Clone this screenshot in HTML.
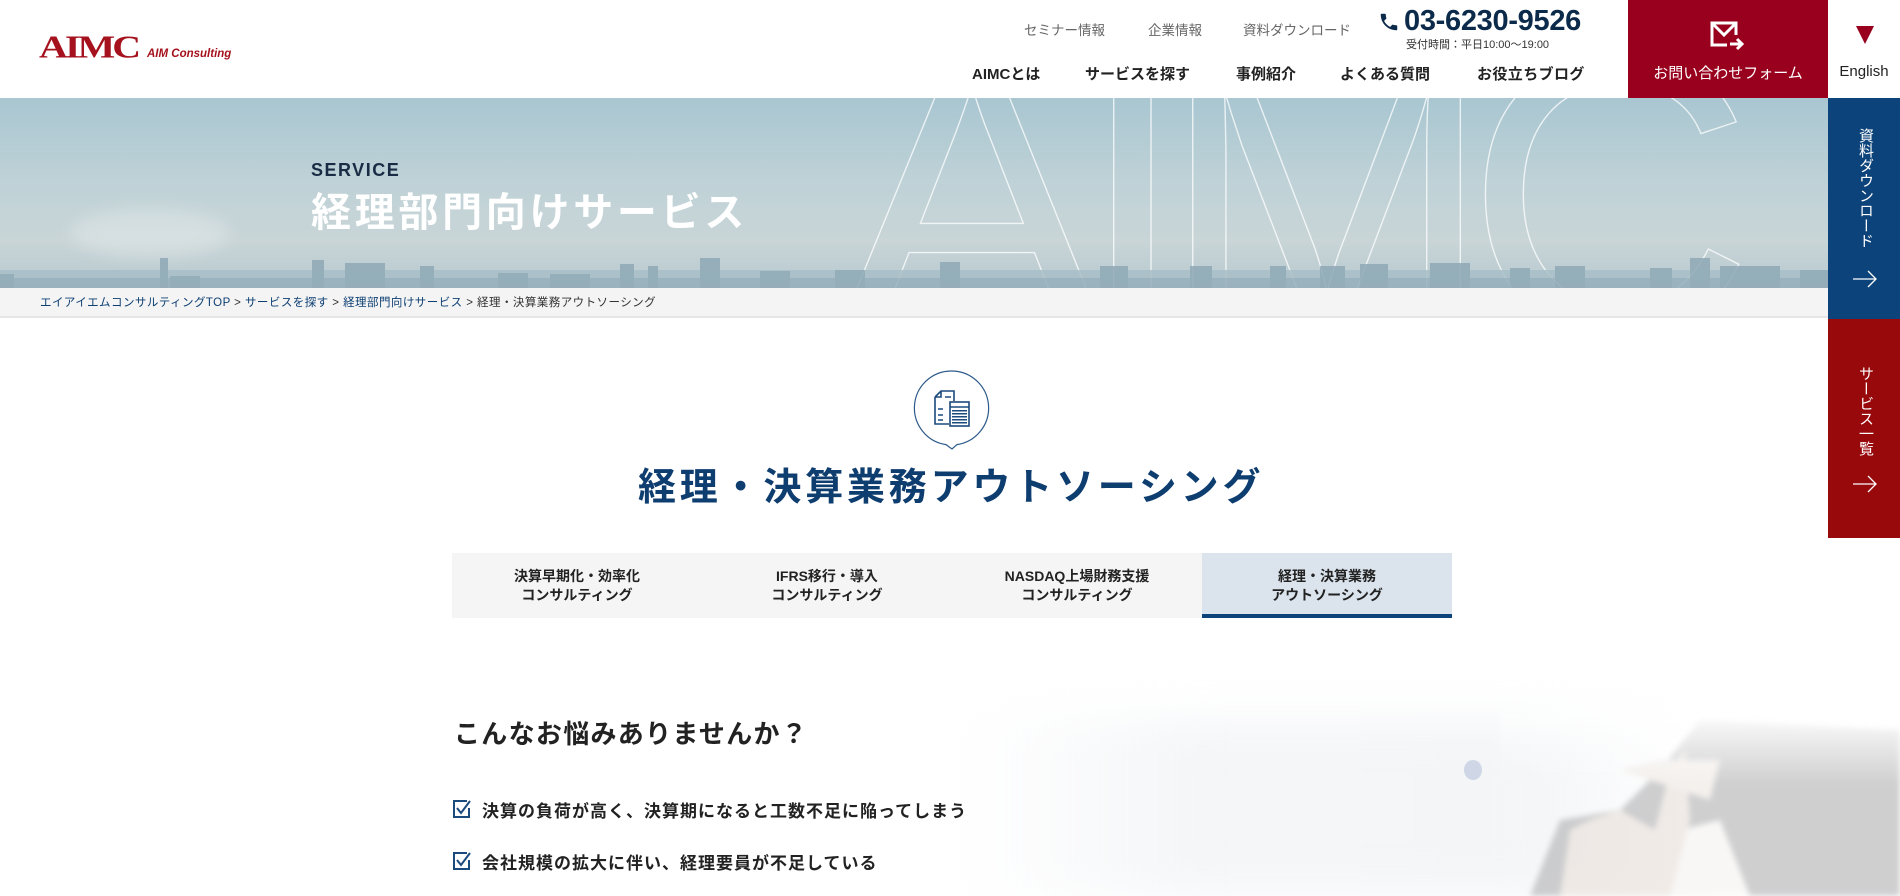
<!DOCTYPE html>
<html><head><meta charset="utf-8"><style>
*{margin:0;padding:0;box-sizing:border-box}
body{width:1900px;height:896px;overflow:hidden;background:#fff;font-family:"Liberation Sans","Noto Sans CJK JP",sans-serif;position:relative;color:#222}
.a{position:absolute;white-space:nowrap}
.hero{position:absolute;left:0;top:98px;width:1828px;height:190px;overflow:hidden;background:linear-gradient(180deg,#a9c6d1 0%,#bfd2d7 45%,#c9d5d7 75%,#b7c9cf 100%)}
.crumb{position:absolute;left:0;top:288px;width:1828px;height:30px;background:#f4f4f4;border-bottom:2px solid #e6e6e6}
.tab{position:absolute;top:553px;width:250px;height:65px;background:#f5f5f5;font-size:14px;font-weight:bold;text-align:center;line-height:19px;padding-top:14px;color:#222}
</style></head><body>
<!-- header -->
<div class="a" style="left:39px;top:28px;font-family:'Liberation Serif',serif;font-weight:bold;font-size:40px;color:#a5121e;letter-spacing:-3px;transform:scaleY(0.8);transform-origin:top left">AIMC</div>
<div class="a" style="left:147px;top:48px;font-size:11.5px;font-weight:bold;font-style:italic;color:#a5121e">AIM Consulting</div>
<div class="a" style="left:1024px;top:19px;font-size:13.5px;color:#666">セミナー情報</div>
<div class="a" style="left:1148px;top:19px;font-size:13.5px;color:#666">企業情報</div>
<div class="a" style="left:1243px;top:19px;font-size:13.5px;color:#666">資料ダウンロード</div>
<svg class="a" style="left:1378px;top:11px" width="22" height="22" viewBox="0 0 24 24"><path fill="#0c2a4a" d="M6.6 10.8c1.4 2.8 3.8 5.1 6.6 6.6l2.2-2.2c.3-.3.7-.4 1-.2 1.1.4 2.3.6 3.6.6.6 0 1 .4 1 1V20c0 .6-.4 1-1 1C10.6 21 3 13.4 3 4c0-.6.4-1 1-1h3.5c.6 0 1 .4 1 1 0 1.3.2 2.5.6 3.6.1.3 0 .7-.2 1z"/></svg>
<div class="a" style="left:1404px;top:5px;font-size:29px;font-weight:bold;color:#0c2a4a;letter-spacing:-0.3px">03-6230-9526</div>
<div class="a" style="left:1406px;top:36px;font-size:11px;color:#333">受付時間：平日10:00〜19:00</div>
<div class="a" style="left:972px;top:63px;font-size:15px;font-weight:bold;color:#222">AIMCとは</div>
<div class="a" style="left:1085px;top:63px;font-size:15px;font-weight:bold;color:#222">サービスを探す</div>
<div class="a" style="left:1236px;top:63px;font-size:15px;font-weight:bold;color:#222">事例紹介</div>
<div class="a" style="left:1340px;top:63px;font-size:15px;font-weight:bold;color:#222">よくある質問</div>
<div class="a" style="left:1477px;top:63px;font-size:15px;font-weight:bold;color:#222;letter-spacing:.4px">お役立ちブログ</div>
<div class="a" style="left:1628px;top:0;width:200px;height:98px;background:#98001e"></div>
<svg class="a" style="left:1708px;top:19px" width="40" height="34" viewBox="0 0 40 34"><path d="M19 26H4V4h24v12M4 4l12 12 12-12" fill="none" stroke="#fff" stroke-width="3"/><path d="M22 25h11M29 20l5 5-5 5" fill="none" stroke="#fff" stroke-width="3"/></svg>
<div class="a" style="left:1628px;top:62px;width:200px;text-align:center;font-size:15px;color:#fff">お問い合わせフォーム</div>
<div class="a" style="left:1856px;top:26px;width:0;height:0;border-left:9px solid transparent;border-right:9px solid transparent;border-top:18px solid #98001e"></div>
<div class="a" style="left:1828px;top:63px;width:72px;text-align:center;font-size:15px;color:#222">English</div>
<!-- hero -->
<div class="hero">
<div class="a" style="left:70px;top:110px;width:160px;height:50px;border-radius:50%;background:rgba(255,255,255,.25);filter:blur(8px)"></div>
<svg class="a" style="left:0;top:0" width="1828" height="190">
<text x="838" y="235" font-family="Liberation Sans,sans-serif" font-size="400" fill="none" stroke="rgba(255,255,255,.75)" stroke-width="1.4" letter-spacing="-28">AIMC</text>
<g fill="#8ea9b6" opacity=".85">
<rect x="0" y="172" width="1828" height="18" fill="#a9bfc8"/>
<rect x="0" y="180" width="1828" height="10" fill="#95afbb"/>
<rect x="0" y="176" width="14" height="14"/><rect x="160" y="160" width="8" height="30"/><rect x="170" y="178" width="30" height="12"/>
<rect x="312" y="162" width="12" height="28"/><rect x="345" y="165" width="40" height="25"/><rect x="420" y="168" width="14" height="22"/>
<rect x="498" y="175" width="30" height="15"/><rect x="550" y="176" width="40" height="14"/>
<rect x="620" y="166" width="14" height="24"/><rect x="648" y="168" width="10" height="22"/>
<rect x="700" y="160" width="20" height="30"/><rect x="760" y="173" width="30" height="17"/>
<rect x="835" y="172" width="30" height="18"/><rect x="940" y="164" width="20" height="26"/><rect x="1100" y="168" width="28" height="22"/>
<rect x="1190" y="168" width="22" height="22"/><rect x="1270" y="168" width="16" height="22"/><rect x="1320" y="168" width="25" height="22"/>
<rect x="1360" y="166" width="28" height="24"/><rect x="1430" y="165" width="40" height="25"/><rect x="1510" y="170" width="20" height="20"/><rect x="1555" y="168" width="30" height="22"/>
<rect x="1650" y="170" width="22" height="20"/><rect x="1690" y="160" width="20" height="30"/><rect x="1720" y="168" width="60" height="22"/><rect x="1800" y="172" width="28" height="18"/>
</g></svg>
<div class="a" style="left:311px;top:62px;font-size:18px;font-weight:bold;color:#1a2c45;letter-spacing:1.5px">SERVICE</div>
<div class="a" style="left:311px;top:82px;font-size:40px;font-weight:bold;color:#fff;letter-spacing:3.7px">経理部門向けサービス</div>
</div>
<div class="crumb"><div class="a" style="left:40px;top:6px;font-size:11.5px;color:#333;letter-spacing:.45px"><span style="color:#0d3f73">エイアイエムコンサルティングTOP</span> &gt; <span style="color:#0d3f73">サービスを探す</span> &gt; <span style="color:#0d3f73">経理部門向けサービス</span> &gt; 経理・決算業務アウトソーシング</div></div>
<!-- side -->
<div class="a" style="left:1828px;top:98px;width:72px;height:221px;background:#0c437a"></div>
<div class="a" style="left:1855px;top:128px;width:18px;font-size:15px;line-height:16.5px;color:#fff;writing-mode:vertical-rl">資料ダウンロード</div>
<svg class="a" style="left:1852px;top:270px" width="26" height="18"><path d="M1 9h23M16 1l8 8-8 8" fill="none" stroke="#fff" stroke-width="1.3"/></svg>
<div class="a" style="left:1828px;top:319px;width:72px;height:219px;background:#98090c"></div>
<div class="a" style="left:1855px;top:366px;width:18px;font-size:15px;line-height:16.5px;color:#fff;writing-mode:vertical-rl">サービス一覧</div>
<svg class="a" style="left:1852px;top:475px" width="26" height="18"><path d="M1 9h23M16 1l8 8-8 8" fill="none" stroke="#fff" stroke-width="1.3"/></svg>
<!-- icon -->
<svg class="a" style="left:912px;top:369px" width="80" height="82" viewBox="0 0 80 82"><path d="M39 2A37 37 0 0 0 34 75.6L40 80l5-4.4A37 37 0 0 0 39 2z" fill="#fff" stroke="#2d5a8a" stroke-width="1.2"/>
<g fill="none" stroke="#1b4a7d" stroke-width="1.6"><path d="M23 28l6-6h13v10M23 28v27h14M23 28h6v-6"/><rect x="38" y="33" width="19" height="24"/><path d="M38 38h19M33 28h6M26 40h5M26 46h5M26 51h5"/></g>
<g fill="#1b4a7d"><rect x="40" y="41" width="15" height="1.5"/><rect x="40" y="44" width="15" height="1.5"/><rect x="40" y="47" width="15" height="1.5"/><rect x="40" y="50" width="15" height="1.5"/><rect x="40" y="53" width="15" height="1.5"/></g></svg>
<div class="a" style="left:638px;top:456px;font-size:38px;font-weight:bold;color:#0e3d70;letter-spacing:3.8px">経理・決算業務アウトソーシング</div>
<!-- tabs -->
<div class="tab" style="left:452px">決算早期化・効率化<br>コンサルティング</div>
<div class="tab" style="left:702px">IFRS移行・導入<br>コンサルティング</div>
<div class="tab" style="left:952px">NASDAQ上場財務支援<br>コンサルティング</div>
<div class="tab" style="left:1202px;background:#dbe4ed;border-bottom:4px solid #0c437a">経理・決算業務<br>アウトソーシング</div>
<!-- bg image approx -->
<div class="a" style="left:960px;top:720px;width:940px;height:176px;background:linear-gradient(90deg,rgba(255,255,255,0) 0%,#f4f6f8 25%,#f3f5f7 60%,rgba(255,255,255,0) 78%);filter:blur(20px)"></div>
<div class="a" style="left:1464px;top:760px;width:18px;height:20px;border-radius:50%;background:#c5cfe2;opacity:.8"></div>
<svg class="a" style="left:1500px;top:710px;opacity:.55;filter:blur(3px)" width="400" height="186"><defs><linearGradient id="g" x1="0" y1="0" x2="0" y2="1"><stop offset="0" stop-color="#fff" stop-opacity="1"/><stop offset=".4" stop-color="#fff" stop-opacity="0"/></linearGradient></defs>
<path d="M30 186L60 110 120 100 160 60 200 10 400 20V186z" fill="#a9a9ab"/>
<path d="M170 186L180 120 220 110 250 186z" fill="#f4f2f0"/>
<path d="M60 186L70 120 90 110 120 100 155 120 170 60 185 40 190 110 170 186z" fill="#e6dcd4"/>
<path d="M120 60l40 -10 60 0 -10 40z" fill="#ece5df"/>
<rect width="400" height="186" fill="url(#g)"/></svg>
<div class="a" style="left:454px;top:714px;font-size:26px;font-weight:bold;color:#222;letter-spacing:1.3px">こんなお悩みありませんか？</div>
<svg class="a" style="left:452px;top:799px" width="20" height="20"><path d="M15 2H2v16h15v-9" fill="none" stroke="#1b4a7d" stroke-width="2"/><path d="M5 9l4 5 9-12" fill="none" stroke="#1b4a7d" stroke-width="2"/></svg>
<div class="a" style="left:482px;top:797px;font-size:17px;font-weight:bold;color:#222;letter-spacing:1px">決算の負荷が高く、決算期になると工数不足に陥ってしまう</div>
<svg class="a" style="left:452px;top:851px" width="20" height="20"><path d="M15 2H2v16h15v-9" fill="none" stroke="#1b4a7d" stroke-width="2"/><path d="M5 9l4 5 9-12" fill="none" stroke="#1b4a7d" stroke-width="2"/></svg>
<div class="a" style="left:482px;top:849px;font-size:17px;font-weight:bold;color:#222;letter-spacing:1px">会社規模の拡大に伴い、経理要員が不足している</div>
</body></html>
